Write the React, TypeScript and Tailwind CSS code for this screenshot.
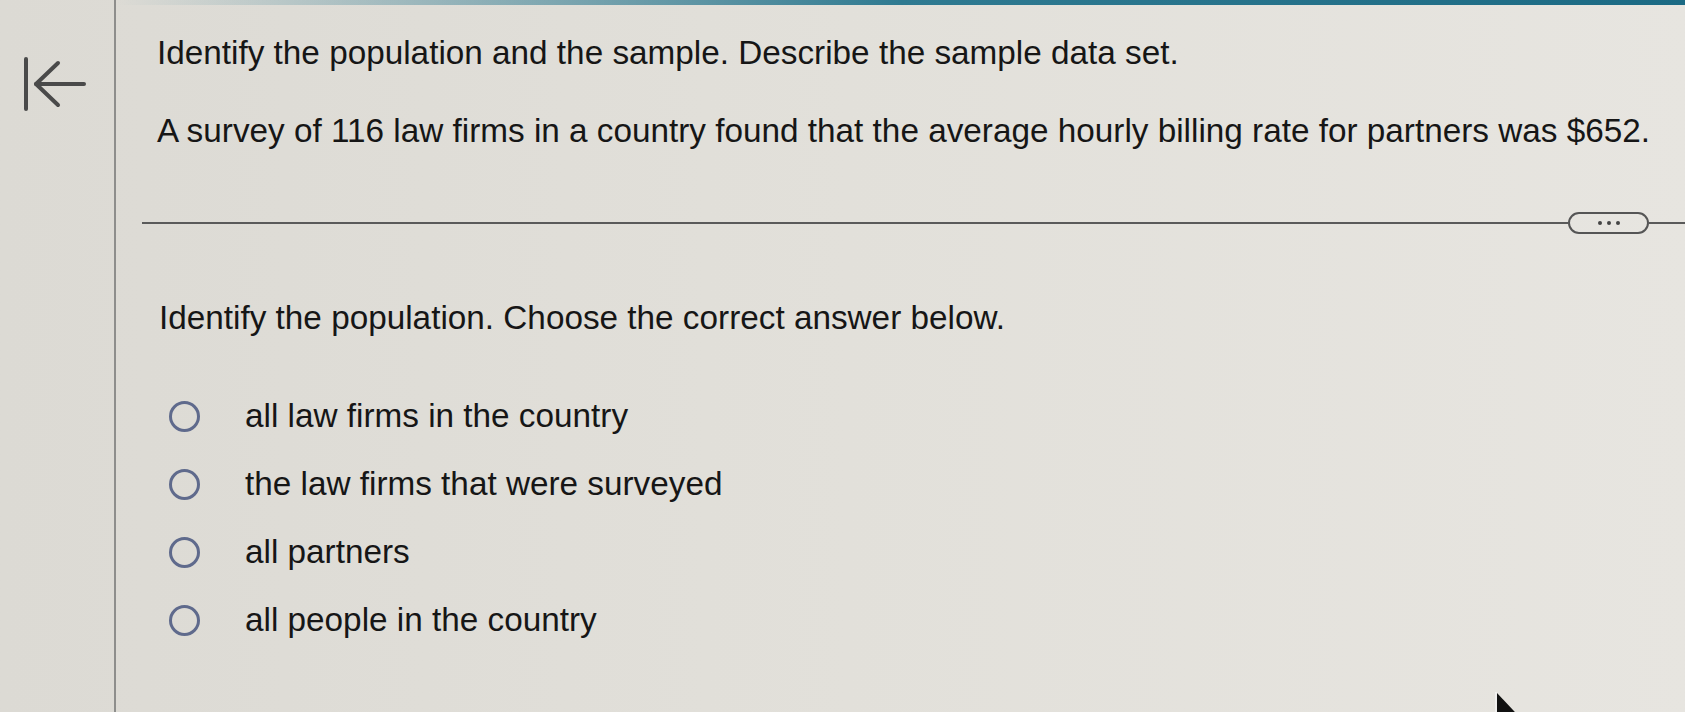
import React from "react";

const options = [
  "all law firms in the country",
  "the law firms that were surveyed",
  "all partners",
  "all people in the country",
];

export default function App() {
  return (
    <div
      className="relative flex h-[712px] w-[1685px] overflow-hidden bg-gradient-to-r from-[#dcdad4] via-[#e2e0da] to-[#e7e5e0] text-[#161616]"
      style={{ fontFamily: '"Liberation Sans", Arial, sans-serif' }}
    >
      {/* Left rail */}
      <div className="flex w-[116px] shrink-0 flex-col border-r-2 border-[#8e8e8c] pl-[22px] pt-[57px]">
        <svg width="66" height="56" viewBox="0 0 66 56" fill="none" stroke="#4a4a4a" strokeWidth="4" strokeLinecap="round" strokeLinejoin="round">
          <line x1="4" y1="2" x2="4" y2="52" />
          <line x1="14" y1="27" x2="62" y2="27" />
          <polyline points="36,6 14,27 36,48" />
        </svg>
      </div>

      {/* Main */}
      <div className="flex min-w-0 flex-1 flex-col">
        <div className="h-[5px] w-full bg-gradient-to-r from-transparent via-[#2f7a91] to-[#1b6a84]" />
        <div className="flex flex-col pl-[41px] pt-[28px] text-[33.3px] leading-[40px]">
          <div>Identify the population and the sample. Describe the sample data set.</div>
          <div className="mt-[38px]">
            A survey of 116 law firms in a country found that the average hourly billing rate for partners was $652.
          </div>
        </div>

        <div className="ml-[26px] mt-[61px] flex h-[22px] items-center">
          <div className="h-[2px] flex-1 bg-[#5a5a5a]" />
          <div className="flex h-[22px] w-[81px] items-center justify-center gap-[5px] rounded-full border-2 border-[#555555]">
            <span className="h-[4px] w-[4px] rounded-full bg-[#444]" />
            <span className="h-[4px] w-[4px] rounded-full bg-[#444]" />
            <span className="h-[4px] w-[4px] rounded-full bg-[#444]" />
          </div>
          <div className="h-[2px] w-[36px] bg-[#5a5a5a]" />
        </div>

        <div className="flex flex-col pl-[43px] text-[33.3px] leading-[40px]">
          <div className="mt-[64px]">Identify the population. Choose the correct answer below.</div>
          <div className="mt-[58px] flex flex-col gap-[28px]">
            {options.map((o) => (
              <div key={o} className="flex h-[40px] items-center">
                <span className="ml-[10px] h-[31px] w-[31px] shrink-0 rounded-full border-[3px] border-[#5f6a8c]" />
                <span className="ml-[45px]">{o}</span>
              </div>
            ))}
          </div>
        </div>
      </div>

      {/* Mouse cursor overlay */}
      <svg className="absolute left-[1490px] top-[688px]" width="60" height="40" viewBox="0 0 60 40">
        <polygon points="7,5 7,40 40,40" fill="#111" />
        <line x1="6" y1="4" x2="6" y2="40" stroke="#f4f4f4" strokeWidth="1.5" />
      </svg>
    </div>
  );
}
